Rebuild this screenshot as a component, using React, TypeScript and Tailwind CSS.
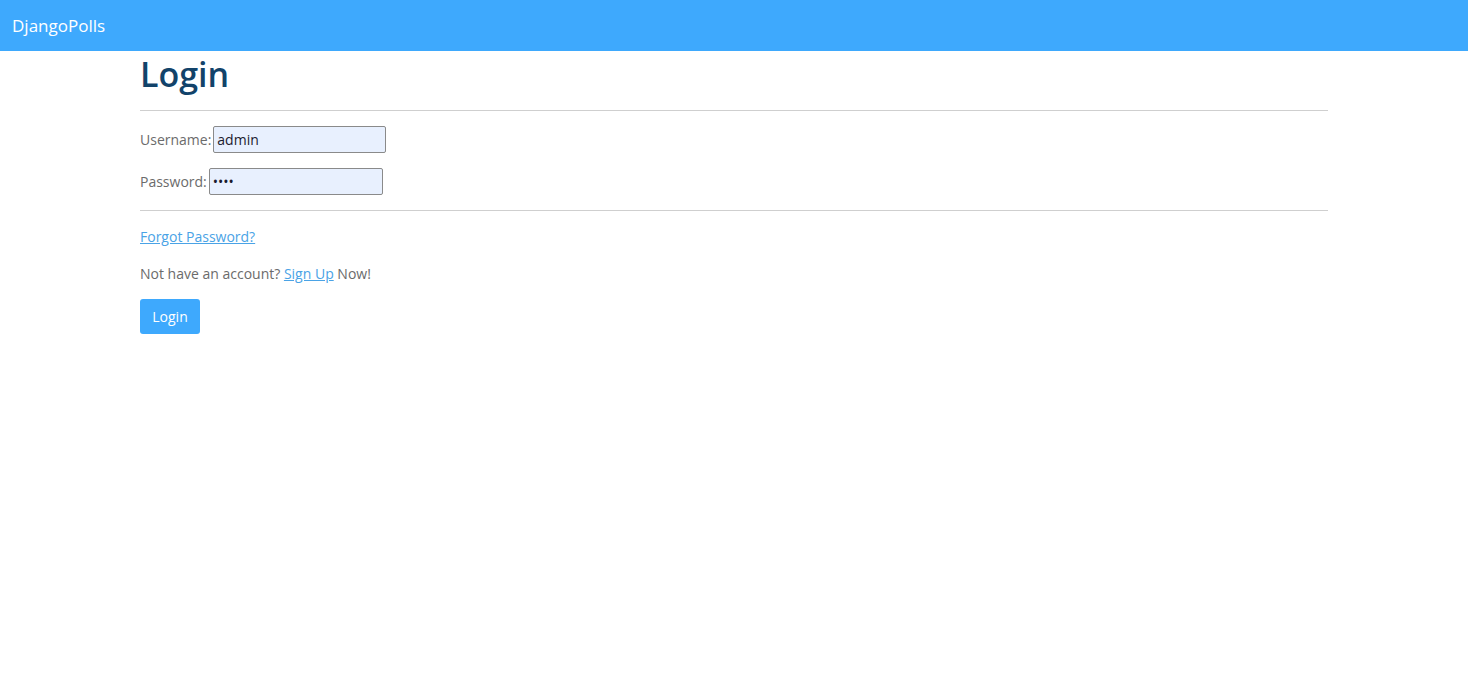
import React from "react"

export default function App() {
  return (
    <div className="min-h-screen bg-white font-['Open_Sans',sans-serif]">
      <header className="h-[51px] bg-[#3ea9fd] flex items-center px-3">
        <span className="text-white text-[17px]">DjangoPolls</span>
      </header>

      <main className="w-[1188px] mx-auto">
        <h1 className="text-[34px] font-semibold text-[#12436a] leading-[44px] mt-[1px]">Login</h1>
        <hr className="border-t border-[#cfcfcf] mt-[14px]" />

        <form className="text-[14px] text-[#6b6b6b]">
          <div className="flex items-center gap-[2px] mt-[15px]">
            <label>Username:</label>
            <input
              type="text"
              defaultValue="admin"
              className="w-[173px] h-[27px] bg-[#e8f0fe] border border-[#8a8a8a] rounded-[2px] px-[3px] text-[#1b1b2e] text-[14px]"
            />
          </div>
          <div className="flex items-center gap-[2px] mt-[15px]">
            <label>Password:</label>
            <input
              type="password"
              defaultValue="test"
              className="w-[174px] h-[27px] bg-[#e8f0fe] border border-[#8a8a8a] rounded-[2px] px-[3px] text-[#1b1b2e] text-[14px]"
            />
          </div>
          <hr className="border-t border-[#cfcfcf] mt-[15px]" />

          <a href="#" className="block mt-[15px] text-[#4aa3e6] underline">Forgot Password?</a>
          <p className="mt-[16px]">
            Not have an account? <a href="#" className="text-[#4aa3e6] underline">Sign Up</a> Now!
          </p>
          <button
            type="button"
            className="mt-[15px] w-[60px] h-[35px] bg-[#3ea9fd] text-white text-[14px] rounded-[3px]"
          >
            Login
          </button>
        </form>
      </main>
    </div>
  )
}
